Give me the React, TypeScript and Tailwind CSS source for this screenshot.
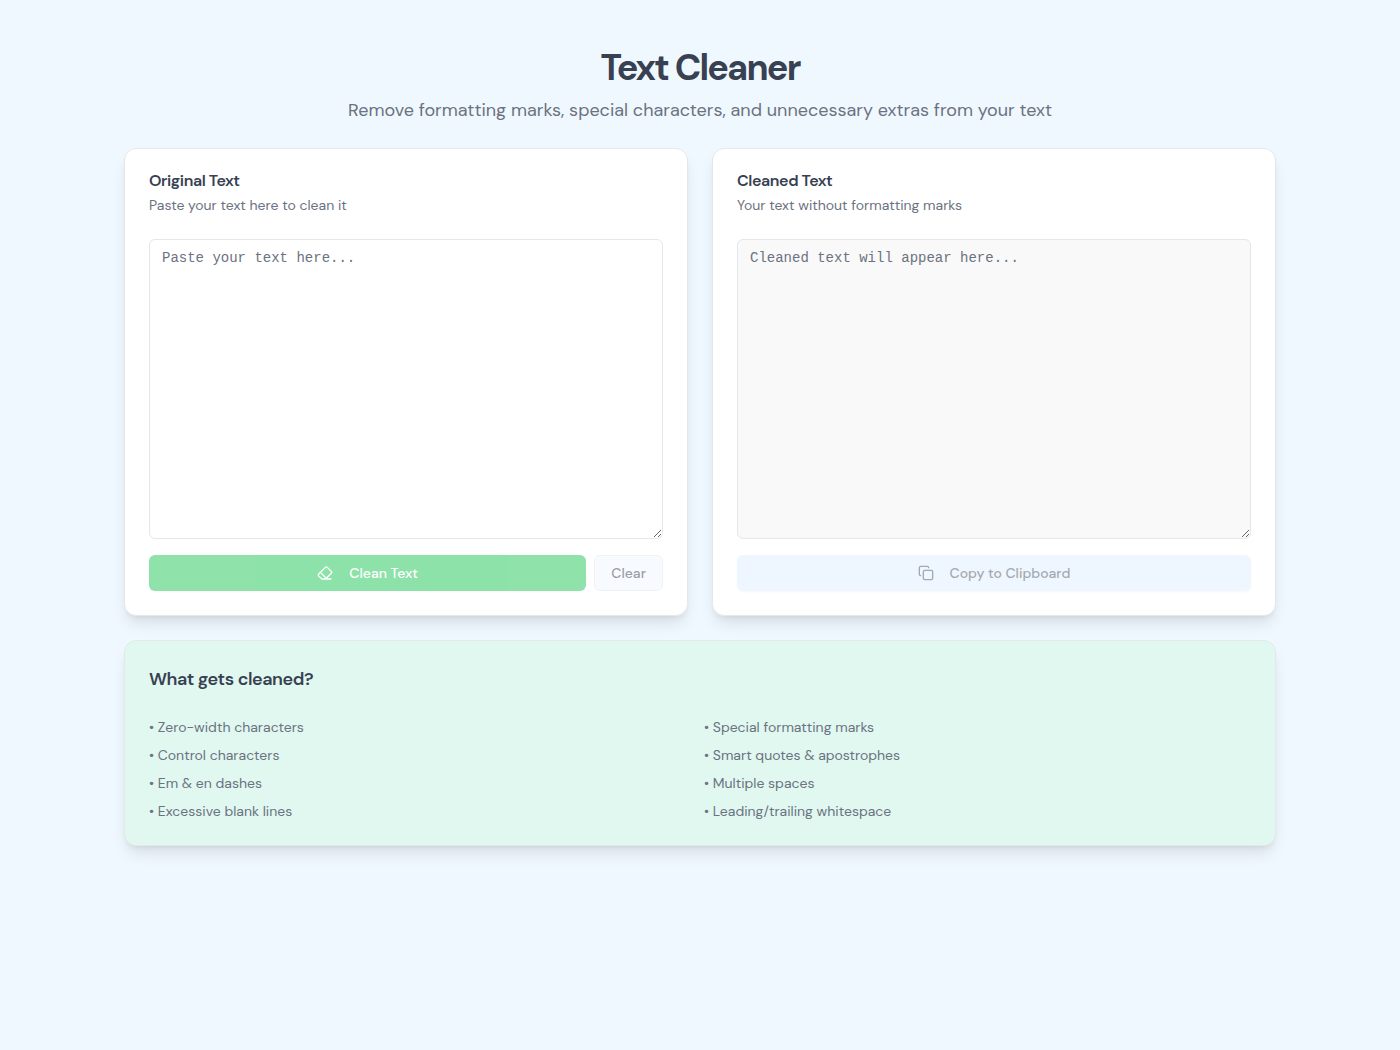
import { useState } from 'react';
import type { ReactNode } from 'react';
import { Copy, Eraser } from 'lucide-react';

const cleanedItems = [
  'Zero-width characters',
  'Special formatting marks',
  'Control characters',
  'Smart quotes & apostrophes',
  'Em & en dashes',
  'Multiple spaces',
  'Excessive blank lines',
  'Leading/trailing whitespace',
];

function cleanText(text: string) {
  return text
    .replace(/[\u200B-\u200F\u2028-\u202E\u2060\uFEFF]/g, '')
    .replace(/[\u0000-\u0008\u000B\u000C\u000E-\u001F\u007F]/g, '')
    .replace(/[\u2018\u2019]/g, "'")
    .replace(/[\u201C\u201D]/g, '"')
    .replace(/[\u2013\u2014]/g, '-')
    .replace(/[ \t]+/g, ' ')
    .replace(/\n{3,}/g, '\n\n')
    .trim();
}

type PanelProps = {
  id: string;
  title: string;
  description: string;
  children: ReactNode;
};

function Panel({ id, title, description, children }: PanelProps) {
  return (
    <section className="rounded-xl border border-gray-200 bg-white shadow-lg">
      <div className="flex flex-col gap-1.5 p-6">
        <label htmlFor={id} className="text-base leading-none font-semibold tracking-tight">
          {title}
        </label>
        <p className="text-sm text-[#6b7280]">{description}</p>
      </div>
      <div className="flex flex-col gap-4 px-6 pb-6">{children}</div>
    </section>
  );
}

export default function App() {
  const [input, setInput] = useState('');
  const [output, setOutput] = useState('');

  const handleClear = () => {
    setInput('');
    setOutput('');
  };

  return (
    <div className="min-h-screen bg-[#f0f8ff] px-4 py-12 font-['DM_Sans','Inter',sans-serif] text-[#374151]">
      <main className="mx-auto max-w-6xl">
        <header className="mb-6 text-center">
          <h1 className="mb-2 text-4xl font-bold tracking-tighter">Text Cleaner</h1>
          <p className="text-lg text-[#6b7280]">
            Remove formatting marks, special characters, and unnecessary extras from your text
          </p>
        </header>

        <div className="grid gap-6 md:grid-cols-2">
          <Panel id="original" title="Original Text" description="Paste your text here to clean it">
            <textarea
              id="original"
              value={input}
              onChange={(e) => setInput(e.target.value)}
              placeholder="Paste your text here..."
              className="min-h-[300px] w-full resize-y rounded-md border border-gray-200 bg-white px-3 py-2 font-['Liberation_Mono',monospace] text-sm placeholder:text-[#6b7280]"
            />
            <div className="flex gap-2">
              <button
                onClick={() => setOutput(cleanText(input))}
                disabled={!input}
                className="flex h-9 flex-1 items-center justify-center gap-4 rounded-md bg-[#1dc655] text-sm font-medium text-white disabled:opacity-50"
              >
                <Eraser size={16} />
                Clean Text
              </button>
              <button
                onClick={handleClear}
                disabled={!input && !output}
                className="h-9 rounded-md border border-gray-200 bg-[#f0f8ff] px-4 text-sm font-medium disabled:opacity-50"
              >
                Clear
              </button>
            </div>
          </Panel>

          <Panel id="cleaned" title="Cleaned Text" description="Your text without formatting marks">
            <textarea
              id="cleaned"
              value={output}
              readOnly
              placeholder="Cleaned text will appear here..."
              className="min-h-[300px] w-full resize-y rounded-md border border-gray-200 bg-[#f9f9f9] px-3 py-2 font-['Liberation_Mono',monospace] text-sm placeholder:text-[#6b7280]"
            />
            <button
              onClick={() => navigator.clipboard.writeText(output)}
              disabled={!output}
              className="flex h-9 items-center justify-center gap-4 rounded-md bg-[#deeeff] text-sm font-medium text-[#4b5563] shadow-xs disabled:opacity-50"
            >
              <Copy size={16} />
              Copy to Clipboard
            </button>
          </Panel>
        </div>

        <section className="mt-6 rounded-xl border border-gray-200 bg-[#e0f8f0] p-6 shadow-lg">
          <h2 className="mb-6 text-lg font-semibold tracking-tight">What gets cleaned?</h2>
          <ul className="grid gap-2 text-sm text-[#6b7280] md:grid-cols-2">
            {cleanedItems.map((item) => (
              <li key={item}>• {item}</li>
            ))}
          </ul>
        </section>
      </main>
    </div>
  );
}
